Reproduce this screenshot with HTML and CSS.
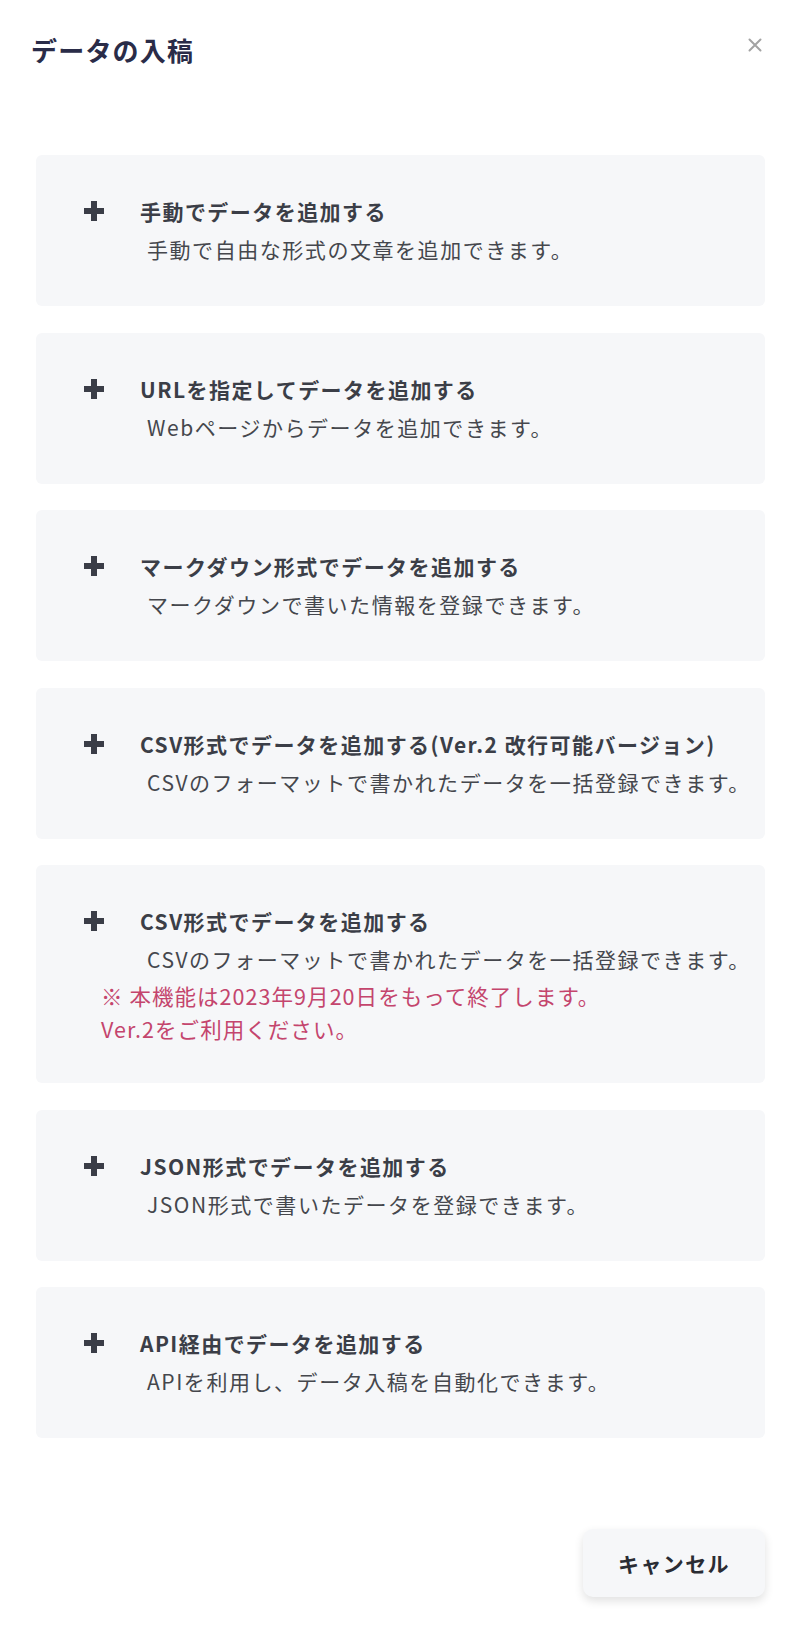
FILE: index.html
```html
<!DOCTYPE html>
<html lang="ja">
<head>
<meta charset="utf-8">
<link rel="stylesheet" href="styles.css">
</head>
<body>
<div class="modal">
  <header class="modal-header">
    <h1 class="modal-title">データの入稿</h1>
    <button class="close" aria-label="close">
      <svg width="14" height="14" viewBox="0 0 14 14"><path d="M1.5 1.5 L12.5 12.5 M12.5 1.5 L1.5 12.5" stroke="#a3a3a3" stroke-width="2" stroke-linecap="round"/></svg>
    </button>
  </header>
  <div class="options">
    <div class="card">
      <svg class="plus" viewBox="0 0 20 20"><path d="M7 0h6v7h7v6h-7v7h-6v-7h-7v-6h7z" fill="#3a3d47"/></svg>
      <div class="texts">
        <div class="title">手動でデータを追加する</div>
        <div class="desc">手動で自由な形式の文章を追加できます。</div>
      </div>
    </div>
    <div class="card">
      <svg class="plus" viewBox="0 0 20 20"><path d="M7 0h6v7h7v6h-7v7h-6v-7h-7v-6h7z" fill="#3a3d47"/></svg>
      <div class="texts">
        <div class="title">URLを指定してデータを追加する</div>
        <div class="desc">Webページからデータを追加できます。</div>
      </div>
    </div>
    <div class="card">
      <svg class="plus" viewBox="0 0 20 20"><path d="M7 0h6v7h7v6h-7v7h-6v-7h-7v-6h7z" fill="#3a3d47"/></svg>
      <div class="texts">
        <div class="title">マークダウン形式でデータを追加する</div>
        <div class="desc">マークダウンで書いた情報を登録できます。</div>
      </div>
    </div>
    <div class="card">
      <svg class="plus" viewBox="0 0 20 20"><path d="M7 0h6v7h7v6h-7v7h-6v-7h-7v-6h7z" fill="#3a3d47"/></svg>
      <div class="texts">
        <div class="title">CSV形式でデータを追加する(Ver.2 改行可能バージョン)</div>
        <div class="desc">CSVのフォーマットで書かれたデータを一括登録できます。</div>
      </div>
    </div>
    <div class="card card-notice">
      <div class="row">
        <svg class="plus" viewBox="0 0 20 20"><path d="M7 0h6v7h7v6h-7v7h-6v-7h-7v-6h7z" fill="#3a3d47"/></svg>
        <div class="texts">
          <div class="title">CSV形式でデータを追加する</div>
          <div class="desc">CSVのフォーマットで書かれたデータを一括登録できます。</div>
        </div>
      </div>
      <div class="notice">※ 本機能は2023年9月20日をもって終了します。<br>Ver.2をご利用ください。</div>
    </div>
    <div class="card">
      <svg class="plus" viewBox="0 0 20 20"><path d="M7 0h6v7h7v6h-7v7h-6v-7h-7v-6h7z" fill="#3a3d47"/></svg>
      <div class="texts">
        <div class="title">JSON形式でデータを追加する</div>
        <div class="desc">JSON形式で書いたデータを登録できます。</div>
      </div>
    </div>
    <div class="card">
      <svg class="plus" viewBox="0 0 20 20"><path d="M7 0h6v7h7v6h-7v7h-6v-7h-7v-6h7z" fill="#3a3d47"/></svg>
      <div class="texts">
        <div class="title">API経由でデータを追加する</div>
        <div class="desc">APIを利用し、データ入稿を自動化できます。</div>
      </div>
    </div>
  </div>
  <footer class="modal-footer">
    <button class="cancel">キャンセル</button>
  </footer>
</div>
</body>
</html>
```

FILE: styles.css
```css
* { box-sizing: border-box; }
html, body {
  margin: 0;
  padding: 0;
  background: #ffffff;
}
body {
  font-family: "Noto Sans CJK JP", "Noto Sans", sans-serif;
  color: #3d4049;
}
.modal {
  width: 800px;
  min-height: 1628px;
  display: flex;
  flex-direction: column;
}
.modal-header {
  display: flex;
  justify-content: space-between;
  align-items: flex-start;
  padding: 32px 38px 0 31px;
  height: 155px;
}
.modal-title {
  margin: 0;
  font-size: 26px;
  line-height: 36px;
  font-weight: 700;
  color: #2a2c48;
  letter-spacing: 1.2px;
}
.close {
  border: 0;
  background: none;
  padding: 0;
  margin-top: 6px;
  width: 14px;
  height: 14px;
  display: flex;
}
.options {
  display: flex;
  flex-direction: column;
  gap: 26.5px;
  padding: 0 35px 0 36px;
}
.card {
  background: #f6f7f9;
  border-radius: 6px;
  padding: 40px 10px 41px 48px;
  display: flex;
  gap: 36px;
  min-height: 151px;
}
.card-notice {
  flex-direction: column;
  gap: 0;
  padding-bottom: 38px;
}
.row {
  display: flex;
  gap: 36px;
}
.plus {
  width: 20px;
  height: 20px;
  flex: none;
  margin-top: 6px;
}
.title {
  font-size: 21px;
  line-height: 32px;
  font-weight: 700;
  color: #3b3e47;
  letter-spacing: 1.45px;
  white-space: nowrap;
}
.desc {
  margin-top: 6px;
  padding-left: 7px;
  font-size: 21px;
  line-height: 32px;
  color: #45474d;
  letter-spacing: 1.55px;
  white-space: nowrap;
}
.notice {
  margin-top: 4px;
  margin-left: 17px;
  font-size: 21.5px;
  line-height: 33px;
  color: #c4456d;
  letter-spacing: 1.05px;
}
.modal-footer {
  display: flex;
  justify-content: flex-end;
  padding: 91px 35px 0 0;
}
.cancel {
  width: 182px;
  height: 68px;
  border: 0;
  border-radius: 10px;
  background: #f6f7f9;
  box-shadow: 0 4px 10px rgba(0, 0, 0, 0.12);
  font-family: "Noto Sans CJK JP", sans-serif;
  font-size: 21px;
  font-weight: 700;
  color: #2a2c33;
  letter-spacing: 1.4px;
}
```
